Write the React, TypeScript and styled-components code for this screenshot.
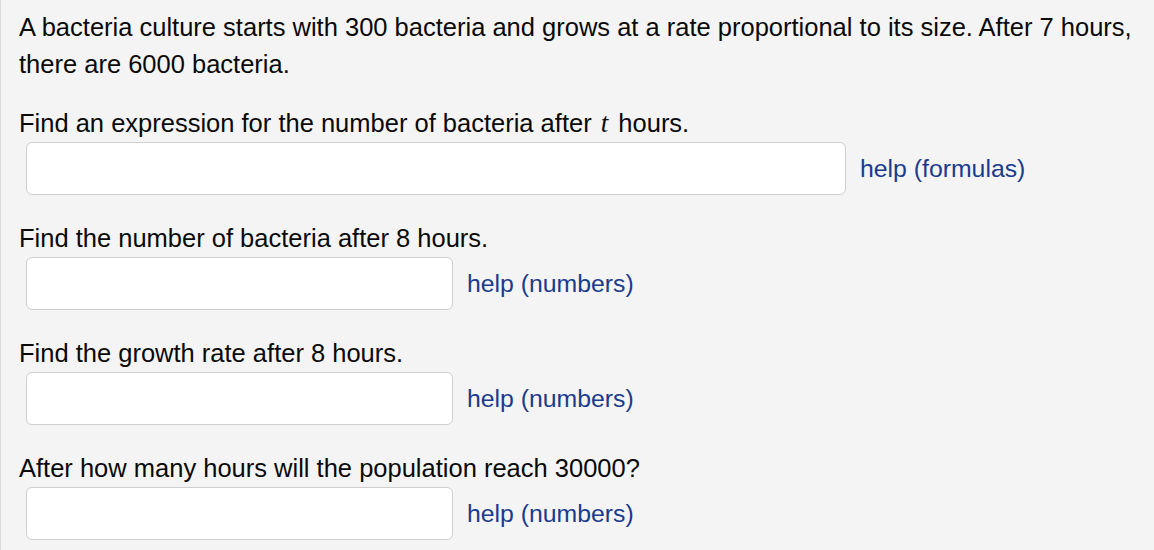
import React from "react";
import styled, { createGlobalStyle } from "styled-components";

const Global = createGlobalStyle`
  html, body { margin: 0; padding: 0; background: #f4f4f4; }
  body { font-family: "Liberation Sans", Arial, Helvetica, sans-serif; }
`;

const Panel = styled.div`
  box-sizing: border-box;
  width: 1154px;
  min-height: 550px;
  background: #f4f4f4;
  border-left: 1px solid #dcdcdc;
  padding: 9px 4px 0 18px;
  color: #0a0a0a;
  font-size: 25.5px;
  line-height: 37px;
`;

const Intro = styled.p`
  margin: 0 0 22px 0;
`;

const Question = styled.div`
  margin-bottom: 25px;
`;

const Label = styled.div`
  margin: 0;
`;

const MathVar = styled.span`
  font-family: "Liberation Serif", "Times New Roman", serif;
  font-style: italic;
  font-size: 27px;
  padding: 0 3px 0 2px;
`;

const Row = styled.div`
  display: flex;
  align-items: center;
  gap: 14px;
  padding-left: 7px;
`;

const Field = styled.input<{ $w: number }>`
  box-sizing: border-box;
  width: ${(p) => p.$w}px;
  height: 53px;
  background: #fff;
  border: 1px solid #cfcfcf;
  border-radius: 6px;
  font-size: 20px;
  padding: 0 10px;
  outline: none;
`;

const Help = styled.a`
  color: #1a3b8e;
  text-decoration: none;
  font-size: 24.8px;
  cursor: pointer;
`;

const questions: { label: React.ReactNode; w: number; help: string }[] = [
  {
    label: (
      <>
        Find an expression for the number of bacteria after <MathVar>t</MathVar> hours.
      </>
    ),
    w: 820,
    help: "help (formulas)",
  },
  { label: "Find the number of bacteria after 8 hours.", w: 427, help: "help (numbers)" },
  { label: "Find the growth rate after 8 hours.", w: 427, help: "help (numbers)" },
  { label: "After how many hours will the population reach 30000?", w: 427, help: "help (numbers)" },
];

export default function App() {
  return (
    <>
      <Global />
      <Panel>
        <Intro>
          A bacteria culture starts with 300 bacteria and grows at a rate proportional to its size. After 7 hours,
          there are 6000 bacteria.
        </Intro>
        {questions.map((q, i) => (
          <Question key={i}>
            <Label>{q.label}</Label>
            <Row>
              <Field $w={q.w} type="text" />
              <Help>{q.help}</Help>
            </Row>
          </Question>
        ))}
      </Panel>
    </>
  );
}
